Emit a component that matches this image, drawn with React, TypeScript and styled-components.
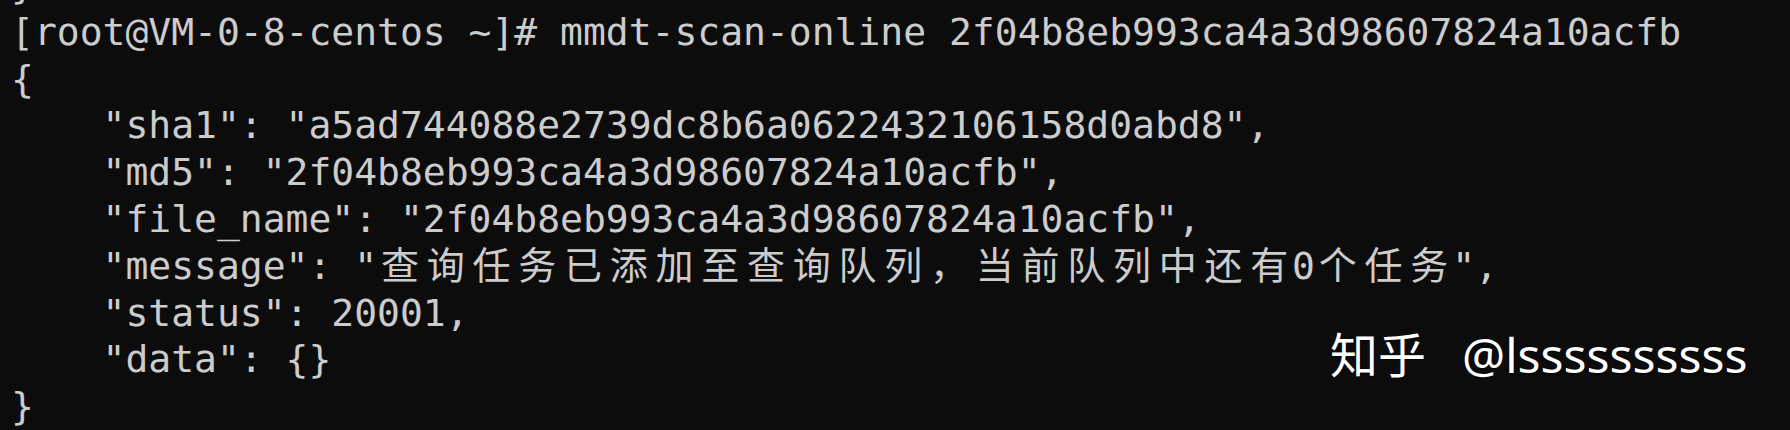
import React from "react";
import styled, { createGlobalStyle } from "styled-components";

const Global = createGlobalStyle`
  html, body {
    margin: 0;
    padding: 0;
    background: #0c0c0c;
  }
  body {
    width: 1790px;
    height: 430px;
    overflow: hidden;
  }
`;

const Screen = styled.div`
  position: relative;
  width: 1790px;
  height: 430px;
  background: #0c0c0c;
  overflow: hidden;
`;

const Terminal = styled.div`
  display: flex;
  flex-direction: column;
  margin-top: -38px;
  padding-left: 11px;
  font-family: "DejaVu Sans Mono", "Liberation Mono", "Noto Sans CJK SC", monospace;
  font-size: 38px;
  line-height: 46.8px;
  color: #cccccc;
  white-space: pre;
`;

const Line = styled.div`
  height: 46.8px;
`;

const Wide = styled.span`
  display: inline-block;
  width: 2ch;
  text-align: center;
  font-family: "DejaVu Sans Mono", "Noto Sans CJK SC", sans-serif;
`;

const Watermark = styled.div`
  position: absolute;
  left: 1330px;
  top: 322px;
  display: flex;
  align-items: baseline;
  gap: 36px;
  font-family: "Noto Sans CJK SC", "Noto Sans", sans-serif;
  font-size: 48px;
  line-height: 60px;
  color: #ffffff;
  text-shadow: 1px 1px 2px rgba(0, 0, 0, 0.6);
  white-space: nowrap;
`;

const Handle = styled.span`
  font-family: "Noto Sans", "Noto Sans CJK SC", sans-serif;
  font-weight: 400;
`;

const isWide = (ch: string) => /[\u3000-\u9fff\uff00-\uffef]/.test(ch);

const renderText = (text: string) => {
  const parts: React.ReactNode[] = [];
  let buf = "";
  Array.from(text).forEach((ch, i) => {
    if (isWide(ch)) {
      if (buf) {
        parts.push(buf);
        buf = "";
      }
      parts.push(<Wide key={i}>{ch}</Wide>);
    } else {
      buf += ch;
    }
  });
  if (buf) parts.push(buf);
  return parts;
};

const lines = [
  "}",
  "[root@VM-0-8-centos ~]# mmdt-scan-online 2f04b8eb993ca4a3d98607824a10acfb",
  "{",
  '    "sha1": "a5ad744088e2739dc8b6a0622432106158d0abd8",',
  '    "md5": "2f04b8eb993ca4a3d98607824a10acfb",',
  '    "file_name": "2f04b8eb993ca4a3d98607824a10acfb",',
  '    "message": "查询任务已添加至查询队列，当前队列中还有0个任务",',
  '    "status": 20001,',
  '    "data": {}',
  "}",
];

export default function App() {
  return (
    <>
      <Global />
      <Screen>
        <Terminal>
          {lines.map((l, i) => (
            <Line key={i}>{renderText(l)}</Line>
          ))}
        </Terminal>
        <Watermark>
          <span>知乎</span>
          <Handle>@lssssssssss</Handle>
        </Watermark>
      </Screen>
    </>
  );
}
